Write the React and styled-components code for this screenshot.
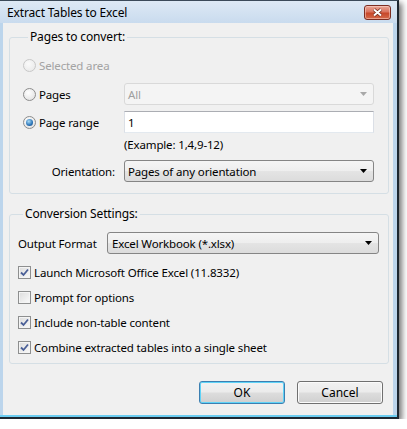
import React from 'react'
import styled, { createGlobalStyle } from 'styled-components'

const GlobalStyle = createGlobalStyle`
  body {
    margin: 0;
    background: #fff;
    font-family: "Noto Sans", "Segoe UI", sans-serif;
    font-size: 11.5px;
    letter-spacing: -0.15px;
    color: #000;
  }
`

const Window = styled.div`
  width: 399px;
  height: 419px;
  box-sizing: border-box;
  display: flex;
  flex-direction: column;
  border-top: 1px solid #3b4a59;
  border-right: 2px solid #1d2731;
  border-bottom: 2px solid #1d2731;
  box-shadow: 3px 3px 6px rgba(0, 0, 0, 0.55);
`

const TitleBar = styled.div`
  flex: none;
  height: 22px;
  display: flex;
  align-items: center;
  justify-content: space-between;
  padding: 0 6px 0 7px;
  background: linear-gradient(#dde9f5, #c9dbee);
`

const Title = styled.span`
  font-size: 12px;
  line-height: 16px;
  margin-top: 1px;
`

const CloseButton = styled.div`
  width: 27px;
  height: 15px;
  box-sizing: border-box;
  display: flex;
  align-items: center;
  justify-content: center;
  border: 1px solid #7c2d22;
  border-radius: 3px;
  background: linear-gradient(#eaa797 0%, #d9735f 45%, #c7472a 55%, #d46a4c 100%);
  box-shadow: inset 0 0 0 1px rgba(255, 220, 210, 0.5);
`

const Frame = styled.div`
  flex: 1;
  min-height: 0;
  display: flex;
  padding: 0 4px 2px 3px;
  background: #bcd5ec;
  box-shadow: inset 0 -2px 0 #6ccdf1;
`

const Body = styled.div`
  flex: 1;
  display: flex;
  flex-direction: column;
  background: #f0f0f0;
`

const Group = styled.fieldset`
  flex: none;
  margin: ${(p) => p.$top}px 4px 0 6px;
  padding: ${(p) => p.$pad};
  border: 1px solid #d5dfe5;
  border-radius: 3px;
  min-width: 0;
`

const Legend = styled.legend`
  margin-left: 5px;
  padding: 0 2px;
  line-height: 16px;
  font-size: 12px;
`

const Row = styled.div`
  display: flex;
  align-items: center;
  height: 22px;
  margin-top: ${(p) => p.$gap || 0}px;
`

const OptionLabel = styled.label`
  width: ${(p) => p.$w}px;
  flex: none;
  display: flex;
  align-items: center;
  justify-content: ${(p) => (p.$right ? 'flex-end' : 'flex-start')};
  gap: 3px;
  padding-right: ${(p) => (p.$right ? 9 : 0)}px;
  box-sizing: border-box;
  color: ${(p) => (p.$disabled ? '#a3a3a3' : '#000')};
`

const RadioDot = styled.span`
  width: 13px;
  height: 13px;
  box-sizing: border-box;
  border-radius: 50%;
  border: 1px solid ${(p) => (p.$disabled ? '#c8c8c8' : '#8c8c8c')};
  background: ${(p) =>
    p.$disabled
      ? 'radial-gradient(circle at 40% 35%, #fafafa, #e6e6e6)'
      : 'radial-gradient(circle at 40% 35%, #ffffff, #dcdcdc)'};
  display: flex;
  align-items: center;
  justify-content: center;
  &::after {
    content: '';
    display: ${(p) => (p.$checked ? 'block' : 'none')};
    width: 7px;
    height: 7px;
    border-radius: 50%;
    background: radial-gradient(circle at 40% 35%, #a9dcf7, #2a73b7 60%, #143f74);
  }
`

const Note = styled.div`
  margin: 4px 0 0 101px;
  line-height: 16px;
`

const Select = styled.div`
  width: ${(p) => p.$w}px;
  height: 22px;
  box-sizing: border-box;
  display: flex;
  align-items: center;
  justify-content: space-between;
  padding: 0 6px 0 ${(p) => p.$pl || 3}px;
  border: 1px solid ${(p) => (p.$disabled ? '#d9d9d9' : '#858585')};
  border-radius: 3px;
  background: ${(p) =>
    p.$disabled ? '#f4f4f4' : 'linear-gradient(#f5f5f5 0%, #eeeeee 50%, #e4e4e4 51%, #dcdcdc 100%)'};
  color: ${(p) => (p.$disabled ? '#9f9f9f' : '#000')};
`

const TextBox = styled.div`
  width: 250px;
  height: 22px;
  box-sizing: border-box;
  display: flex;
  align-items: center;
  padding-left: 3px;
  background: #fff;
  border: 1px solid #dbdfe6;
  border-top-color: #abadb3;
  border-bottom-color: #e3e9ef;
`

const CheckList = styled.div`
  margin-top: 6px;
`

const CheckRow = styled.label`
  display: flex;
  align-items: center;
  gap: 3px;
  height: 25px;
`

const CheckBox = styled.span`
  width: 13px;
  height: 13px;
  box-sizing: border-box;
  border: 1px solid #8e8f8f;
  background: linear-gradient(135deg, #dcdcdc, #fafafa);
  box-shadow: inset 0 0 0 1px #f4f4f4;
  display: flex;
  align-items: center;
  justify-content: center;
`

const ButtonRow = styled.div`
  display: flex;
  justify-content: flex-end;
  gap: 12px;
  margin-top: 17px;
  padding-right: 10px;
`

const Button = styled.button`
  width: 86px;
  height: 23px;
  box-sizing: border-box;
  padding: 0;
  font: inherit;
  font-size: 12px;
  color: #000;
  border: 1px solid ${(p) => (p.$default ? '#3c7fb1' : '#707070')};
  border-radius: 3px;
  background: linear-gradient(#f2f2f2 0%, #ebebeb 48%, #dddddd 52%, #cfcfcf 100%);
  box-shadow: inset 0 0 0 1px ${(p) => (p.$default ? '#5fd3f7' : '#fbfbfb')};
`

const Arrow = ({ color = '#000' }) => (
  <svg width="7" height="4" viewBox="0 0 7 4">
    <path d="M0 0h7L3.5 4z" fill={color} />
  </svg>
)

const Check = () => (
  <svg width="9" height="9" viewBox="0 0 9 9">
    <path d="M1 4.5 L3.5 7 L8 1.5" fill="none" stroke="#4a5f97" strokeWidth="1.8" />
  </svg>
)

const Radio = ({ label, checked, disabled }) => (
  <OptionLabel $w={101} $disabled={disabled}>
    <RadioDot $checked={checked} $disabled={disabled} />
    {label}
  </OptionLabel>
)

const Option = ({ label, checked }) => (
  <CheckRow>
    <CheckBox>{checked && <Check />}</CheckBox>
    {label}
  </CheckRow>
)

export default function App() {
  return (
    <>
      <GlobalStyle />
      <Window>
        <TitleBar>
          <Title>Extract Tables to Excel</Title>
          <CloseButton>
            <svg width="11" height="9" viewBox="0 0 11 9">
              <path d="M2 1.5 L9 7.5 M9 1.5 L2 7.5" stroke="#6b2418" strokeWidth="3.4" />
              <path d="M2 1.5 L9 7.5 M9 1.5 L2 7.5" stroke="#fff" strokeWidth="2" />
            </svg>
          </CloseButton>
        </TitleBar>
        <Frame>
          <Body>
            <Group $top={6} $pad="9px 0 11px 13px">
              <Legend>Pages to convert:</Legend>
              <Row>
                <Radio label="Selected area" disabled />
              </Row>
              <Row $gap={7}>
                <Radio label="Pages" />
                <Select $w={250} $disabled>
                  All
                  <Arrow color="#a8a8a8" />
                </Select>
              </Row>
              <Row $gap={6}>
                <Radio label="Page range" checked />
                <TextBox>1</TextBox>
              </Row>
              <Note>(Example: 1,4,9-12)</Note>
              <Row $gap={7}>
                <OptionLabel $w={101} $right>
                  Orientation:
                </OptionLabel>
                <Select $w={250}>
                  Pages of any orientation
                  <Arrow />
                </Select>
              </Row>
            </Group>
            <Group $top={12} $pad="10px 0 3px 8px">
              <Legend>Conversion Settings:</Legend>
              <Row>
                <OptionLabel $w={89}>Output Format</OptionLabel>
                <Select $w={272} $pl={4}>
                  Excel Workbook (*.xlsx)
                  <Arrow />
                </Select>
              </Row>
              <CheckList>
                <Option label="Launch Microsoft Office Excel (11.8332)" checked />
                <Option label="Prompt for options" />
                <Option label="Include non-table content" checked />
                <Option label="Combine extracted tables into a single sheet" checked />
              </CheckList>
            </Group>
            <ButtonRow>
              <Button $default>OK</Button>
              <Button>Cancel</Button>
            </ButtonRow>
          </Body>
        </Frame>
      </Window>
    </>
  )
}
